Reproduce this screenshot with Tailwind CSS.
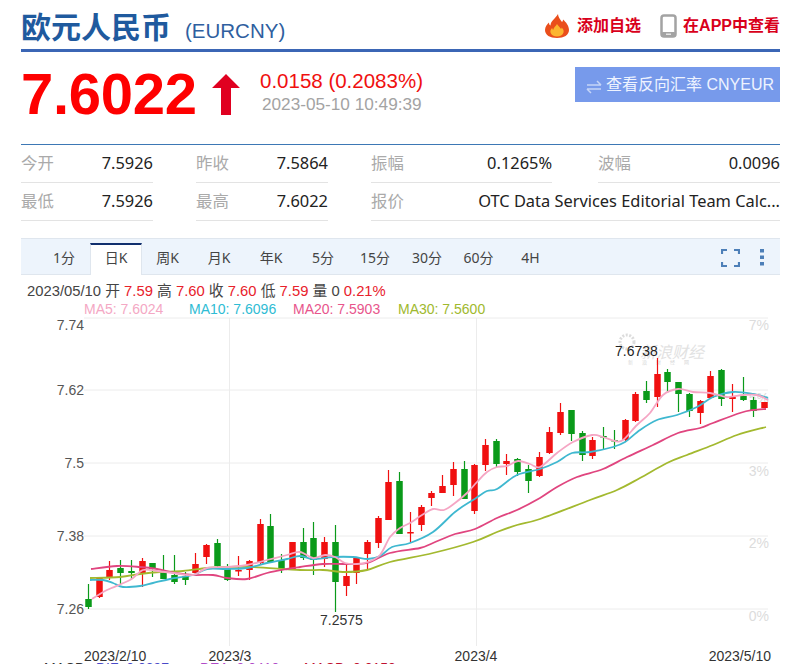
<!DOCTYPE html>
<html lang="zh">
<head>
  <meta charset="UTF-8">
  <title>欧元人民币</title>
  <script src="https://cdn.jsdelivr.net/npm/@tailwindcss/browser@4"></script>
</head>
<body class="bg-white h-[664px] overflow-hidden font-['Liberation_Sans','Noto_Sans_CJK_SC',sans-serif]">
  <div class="ml-[21px] w-[759px]">
    <!-- title -->
    <div class="h-[52px] pt-[6px] border-b-[3px] border-[#3b66b5] flex items-center justify-between">
      <div class="flex items-baseline">
        <h1 class="text-[30px] leading-[42px] font-bold text-[#1f5a9e]">欧元人民币</h1>
        <span class="ml-[14px] text-[20.5px] text-[#2f5f9f]">(EURCNY)</span>
      </div>
      <div class="flex items-center text-base font-bold text-[#d9001b] -mt-[4px]">
        <svg class="w-6 h-6" viewBox="0 0 24 24">
          <path d="M13 0c0 3 2 5 4 8 .8-.8 1-1.500 1-2.500C21 8 24 12 24 16c0 5-5 8-12 8S0 21 0 16c0-3 2-6 4-7.500 0 1.500.4 2.500 1.500 3C5.500 7 10 5 13 0z" fill="#ea4e1b"/>
          <path d="M12 10c1 2 3 3 4 5 .5-.5.7-1 .7-1.500 1.500 1.500 2.300 3 1.800 5-.7 2.500-3.500 4-6.500 4s-5.800-1.500-6.500-4c-.5-2 .5-3.500 1.800-4.500 0 1 .4 1.500 1 1.800C8.500 13.500 11 12 12 10z" fill="#fcb52f"/>
        </svg>
        <span class="ml-[8px]">添加自选</span>
        <svg class="ml-[19px] w-[17px] h-6" viewBox="0 0 17 24">
          <rect x="1.500" y="1.500" width="14" height="21" rx="2.500" fill="#fff" stroke="#a3a3a3" stroke-width="2.500"/>
          <rect x="1" y="18" width="15" height="5" rx="2" fill="#a3a3a3"/>
          <rect x="6" y="19.500" width="5" height="1.500" fill="#e5e5e5"/>
        </svg>
        <span class="ml-[6px]">在APP中查看</span>
      </div>
    </div>

    <!-- price -->
    <div class="h-[92px] flex">
      <div class="w-[175px] pt-[7px] text-[58px] leading-[70px] tracking-[-0.3px] font-bold text-[#fe0000]">7.6022</div>
      <svg class="mt-[22px] ml-[16px] w-7 h-[41px]" viewBox="0 0 28 41">
        <path d="M14 0 28 14H19V41H9V14H0Z" fill="#e00020"/>
      </svg>
      <div class="ml-[20px] pt-[17px]">
        <div class="text-[20.5px] leading-[24px] text-[#f01010]">0.0158 (0.2083%)</div>
        <div class="ml-[2px] text-[17.2px] leading-[23px] text-[#a3a3a3]">2023-05-10 10:49:39</div>
      </div>
      <div class="ml-auto mt-[15px] w-[205px] h-[35px] bg-[#779aeb] text-[#eef3ff] text-base flex items-center justify-end pr-[6px]">
        <svg class="w-[16px] h-[14px] mr-[4px] mt-[5px]" viewBox="0 0 16 14" fill="none" stroke="#c5d5f7" stroke-width="1.500">
          <path d="M1 5H15M15 5 11 1M15 9H1M1 9 5 13"/>
        </svg>
        <span>查看反向汇率 CNYEUR</span>
      </div>
    </div>

    <!-- quote table -->
    <div class="border-t border-[#3d78b5] text-[16.4px] text-[#222] font-['Noto_Sans','Noto_Sans_CJK_SC',sans-serif]">
      <div class="flex h-[38px]">
        <div class="w-[132px] mr-[43px] flex items-center justify-between border-b border-[#e3e3e3]"><span class="text-[#aaa]">今开</span><span>7.5926</span></div>
        <div class="w-[132px] mr-[43px] flex items-center justify-between border-b border-[#e3e3e3]"><span class="text-[#aaa]">昨收</span><span>7.5864</span></div>
        <div class="w-[181px] mr-[46px] flex items-center justify-between border-b border-[#e3e3e3]"><span class="text-[#aaa]">振幅</span><span>0.1265%</span></div>
        <div class="w-[182px] flex items-center justify-between border-b border-[#e3e3e3]"><span class="text-[#aaa]">波幅</span><span>0.0096</span></div>
      </div>
      <div class="flex h-[38px]">
        <div class="w-[132px] mr-[43px] flex items-center justify-between border-b border-[#e3e3e3]"><span class="text-[#aaa]">最低</span><span>7.5926</span></div>
        <div class="w-[132px] mr-[43px] flex items-center justify-between border-b border-[#e3e3e3]"><span class="text-[#aaa]">最高</span><span>7.6022</span></div>
        <div class="flex-1 flex items-center justify-between border-b border-[#e3e3e3]"><span class="text-[#aaa]">报价</span><span>OTC Data Services Editorial Team Calc...</span></div>
      </div>
    </div>

    <!-- tabs -->
    <div class="mt-[17px] h-[37px] bg-[#edf4fc] border-y border-[#dfe6ee] flex text-sm leading-[38px] text-[#444] font-['Noto_Sans','Noto_Sans_CJK_SC',sans-serif]">
      <div class="w-[69px] pl-[32px]">1分</div>
      <div class="w-[52px] mt-[4px] h-[32px] bg-white border-t-2 border-x border-t-[#12306e] border-x-[#dfe6ee] text-center leading-[26px]">日K</div>
      <div class="w-[51px] text-center">周K</div>
      <div class="w-[52px] text-center">月K</div>
      <div class="w-[52px] text-center">年K</div>
      <div class="w-[52px] text-center">5分</div>
      <div class="w-[52px] text-center">15分</div>
      <div class="w-[52px] text-center">30分</div>
      <div class="w-[51px] text-center">60分</div>
      <div class="w-[53px] text-center">4H</div>
      <div class="ml-auto flex items-center pr-[16px] pt-[2px]">
        <svg class="w-[19px] h-[18px]" viewBox="0 0 19 18" fill="none" stroke="#4d7fb8" stroke-width="2.200">
          <path d="M1 5V1H6M13 1H18V5M18 13V17H13M6 17H1V13"/>
        </svg>
        <svg class="ml-[20px] w-[4px] h-[17px]" viewBox="0 0 4 17" fill="#4d7fb8">
          <rect x="0" y="0" width="4" height="3.500"/><rect x="0" y="6.500" width="4" height="3.500"/><rect x="0" y="13" width="4" height="3.500"/>
        </svg>
      </div>
    </div>
  </div>

  <!-- chart -->
  <div class="relative h-[389px]">
    <div class="absolute left-[27px] top-[7px] text-[14.8px] leading-[18px] text-[#444] whitespace-nowrap">2023/05/10 开 <span class="text-[#e8212b]">7.59</span> 高 <span class="text-[#e8212b]">7.60</span> 收 <span class="text-[#e8212b]">7.60</span> 低 <span class="text-[#e8212b]">7.59</span> 量 0 <span class="text-[#e8212b]">0.21%</span></div>
    <div class="absolute left-[84px] top-[26px] flex text-sm leading-[16px] whitespace-nowrap">
      <span class="text-[#f4a8c4] w-[105px]">MA5: 7.6024</span>
      <span class="text-[#2fbcd4] w-[104px]">MA10: 7.6096</span>
      <span class="text-[#e8558c] w-[105px]">MA20: 7.5903</span>
      <span class="text-[#a0b92e]">MA30: 7.5600</span>
    </div>
    <svg id="chart" class="absolute left-0 top-0" width="786" height="389" viewBox="0 275 786 389" font-family="Liberation Sans, sans-serif"></svg>
  </div>

  <script>
    const svg = document.getElementById('chart');
    const NS = 'http://www.w3.org/2000/svg';
    function add(tag, attrs, text) {
      const el = document.createElementNS(NS, tag);
      for (const k in attrs) el.setAttribute(k, attrs[k]);
      if (text) el.textContent = text;
      svg.appendChild(el);
    }

    // grid
    [318, 390, 463, 536, 609].forEach(y => add('line', { x1: 84, x2: 768, y1: y, y2: y, stroke: '#ececec' }));
    [229.5, 476.5].forEach(x => add('line', { x1: x, x2: x, y1: 318, y2: 646, stroke: '#ececec' }));

    // axis labels
    [['7.74', 330], ['7.62', 395], ['7.5', 468], ['7.38', 541], ['7.26', 614]].forEach(([t, y]) =>
      add('text', { x: 84, y, 'text-anchor': 'end', 'font-size': 14, fill: '#555' }, t));
    [['7%', 330], ['5%', 403], ['3%', 476], ['2%', 548], ['0%', 621]].forEach(([t, y]) =>
      add('text', { x: 769, y, 'text-anchor': 'end', 'font-size': 14, fill: '#dcdcdc' }, t));

    // watermark sits behind the candles
    add('circle', { cx: 627, cy: 342, r: 7, fill: 'none', stroke: '#dcdcdc', 'stroke-width': 3, 'stroke-dasharray': '2 1.500' });
    add('text', { x: 640, y: 358, 'font-size': 16, 'font-style': 'italic', fill: '#e2e2e2', 'font-family': 'Noto Sans CJK SC' }, '新浪财经');
    add('text', { x: 628, y: 364, 'font-size': 5, 'letter-spacing': 9, fill: '#d8d8d8', 'font-family': 'Noto Sans CJK SC' }, '新浪财经网');

    // g/r, hi, top, bottom, lo
    const candles = [
      ['g',584,599,607,609],['r',577,578,597,598],['r',561,570,578,580],['g',560,568,573,584],
      ['g',560,571,573,579],['r',558,561,573,587],['g',563,563,569,577],['g',555,573,579,579],
      ['g',555,575,582,584],['g',572,576,580,585],['r',553,564,573,574],['r',544,545,557,564],
      ['g',539,543,566,567],['g',564,568,580,581],['r',556,570,571,576],['r',560,561,570,580],
      ['r',519,524,563,564],['g',514,526,562,562],['g',554,560,569,573],['r',542,542,569,570],
      ['g',528,542,558,560],['g',522,538,560,575],['r',537,542,559,567],['g',525,542,582,612],
      ['r',565,576,586,596],['r',557,558,573,584],['r',540,542,554,569],['r',516,518,543,548],
      ['r',470,482,520,520],['g',472,481,534,534],['r',512,532,533,543],['r',505,507,525,531],
      ['r',491,493,498,506],['r',475,486,493,493],['r',462,469,485,496],['g',461,469,499,499],
      ['r',464,465,511,514],['r',439,445,465,471],['g',439,441,464,468],['r',454,461,464,475],
      ['g',458,459,472,476],['g',465,469,481,493],['r',452,457,476,477],['r',427,432,453,454],
      ['r',403,412,433,435],['g',410,410,434,441],['g',431,433,455,461],['r',437,440,456,459],
      ['g',427,436,437,450],['g',430,440,441,449],['r',419,420,440,441],['r',392,394,421,422],
      ['g',381,391,400,403],['r',358,374,397,407],['g',369,372,382,393],['g',382,382,394,412],
      ['g',393,394,411,417],['r',400,401,413,424],['r',371,376,398,398],['g',369,370,399,406],
      ['r',384,397,399,412],['g',377,396,400,401],['g',397,400,411,417],['r',402,402,408,408]
    ];
    candles.forEach(([c, hi, top, bot, lo], i) => {
      const x = Math.round(88 + i * 10.73);
      const col = c === 'r' ? '#f01010' : '#0a9a1a';
      add('line', { x1: x + .5, x2: x + .5, y1: hi, y2: lo, stroke: col, 'stroke-width': 1.2 });
      add('rect', { x: x - 2.75, y: top, width: 6.5, height: Math.max(bot - top, 1.5), fill: col });
    });

    // moving averages, smoothed through the points
    function smooth(p) {
      let d = `M${p[0][0]} ${p[0][1]}`;
      for (let i = 0; i < p.length - 1; i++) {
        const a = p[i - 1] || p[i], b = p[i], c = p[i + 1], e = p[i + 2] || c;
        d += `C${b[0] + (c[0] - a[0]) / 6} ${b[1] + (c[1] - a[1]) / 6} ${c[0] - (e[0] - b[0]) / 6} ${c[1] - (e[1] - b[1]) / 6} ${c[0]} ${c[1]}`;
      }
      return d;
    }
    const ma = [
      ['#a3b92f', [[90,578],[120,577],[140,574],[160,572],[183,571],[207,568],[227,567],[253,567],[300,570],[323,570],[345,572],[367,570],[390,562],[433,553],[473,542],[497,532],[517,525],[540,519],[590,500],[617,490],[640,478],[667,463],[687,455],[713,445],[737,435],[766,427]]],
      ['#e0457f', [[91,569],[117,566],[140,567],[157,569],[175,573],[193,575],[213,575],[227,578],[247,579],[267,573],[287,569],[300,567],[323,564],[345,564],[367,563],[390,553],[420,548],[433,543],[455,534],[475,529],[497,518],[517,510],[540,498],[557,487],[577,477],[603,469],[627,457],[653,445],[678,433],[700,428],[713,423],[740,413],[753,410],[766,409]]],
      ['#3fb8d0', [[90,580],[103,580],[113,583],[123,587],[140,586],[153,583],[170,579],[193,575],[207,569],[227,569],[247,568],[267,563],[287,559],[300,556],[313,559],[333,557],[353,557],[368,559],[380,556],[392,547],[410,543],[433,532],[455,512],[473,500],[487,491],[497,489],[517,475],[540,469],[557,462],[572,453],[590,452],[613,447],[625,442],[640,430],[657,420],[677,415],[697,407],[713,397],[733,392],[753,394],[768,398]]],
      ['#f5a6c4', [[92,599],[107,590],[130,580],[143,570],[157,571],[173,573],[193,575],[207,568],[227,567],[247,565],[267,560],[287,555],[300,552],[313,558],[325,555],[335,557],[345,563],[357,564],[368,562],[380,555],[390,537],[400,528],[410,523],[422,515],[433,509],[444,510],[455,503],[467,493],[477,482],[487,472],[497,467],[507,466],[518,461],[530,464],[540,467],[557,453],[573,442],[592,435],[603,437],[615,441],[623,440],[637,425],[650,413],[663,395],[678,389],[693,392],[710,393],[727,397],[743,395],[757,395],[768,400]]]
    ];
    ma.forEach(([col, pts]) => add('path', { d: smooth(pts), fill: 'none', stroke: col, 'stroke-width': 1.8 }));

    // extremes
    add('text', { x: 615, y: 356, 'font-size': 14, fill: '#222' }, '7.6738');
    add('text', { x: 320, y: 625, 'font-size': 14, fill: '#333' }, '7.2575');

    // date axis
    [['2023/2/10', 84, 'start'], ['2023/3', 230, 'middle'], ['2023/4', 476, 'middle'], ['2023/5/10', 771, 'end']].forEach(([t, x, a]) =>
      add('text', { x, y: 661, 'text-anchor': a, 'font-size': 14, fill: '#333' }, t));

    // next panel's legend, only its top edge shows in the window
    [['MACD', 44, '#333'], ['DIF: 0.0397', 96, '#4a4ac8'], ['DEA: 0.0410', 200, '#b04ac8'], ['MACD: 0.0150', 304, '#c01030']].forEach(([t, x, col]) =>
      add('text', { x, y: 673, 'font-size': 14, fill: col }, t));
  </script>
</body>
</html>
